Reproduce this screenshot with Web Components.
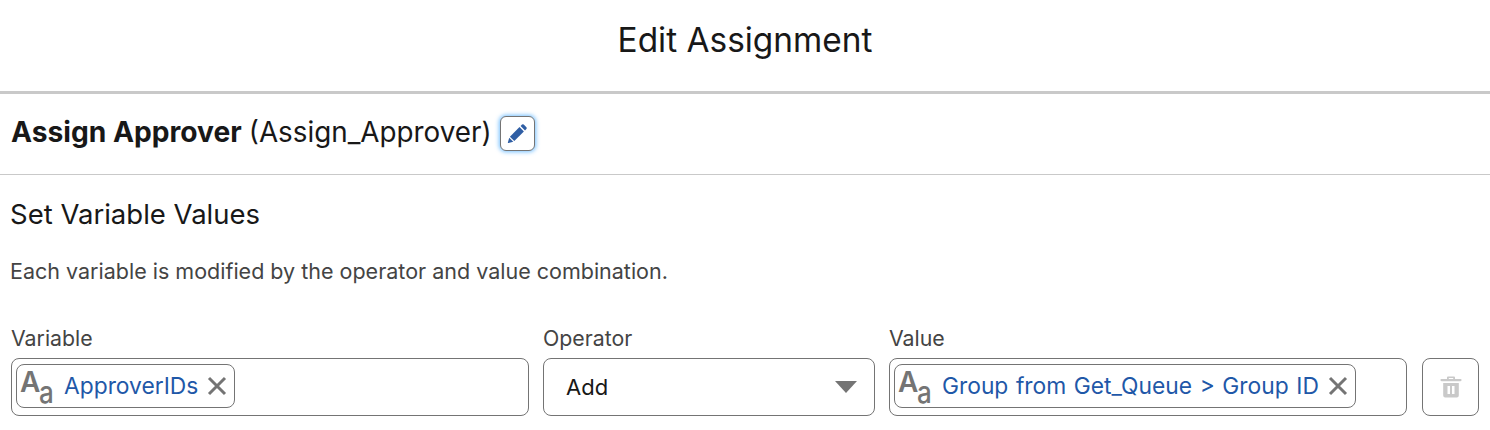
<!DOCTYPE html>
<html lang="en">
<head>
<meta charset="UTF-8">
<title>Edit Assignment</title>
<style>
  html, body { margin: 0; background: #fff; }
  body { font-family: Inter, "Liberation Sans", sans-serif; color: #181818; }
</style>
</head>
<body>
<edit-assignment>
  <assign-header></assign-header>
  <var-section></var-section>
</edit-assignment>

<script>
class EditAssignment extends HTMLElement {
  constructor() {
    super();
    this.attachShadow({ mode: 'open' }).innerHTML = `
      <style>
        :host { display: block; width: 1490px; height: 430px; overflow: hidden; }
        h1 { margin: 0; height: 91px; box-sizing: border-box; padding-top: 17px; text-align: center;
             font: 400 33.4px/46px Inter, sans-serif; color: #181818; }
        .rule { height: 3px; background: #c9c9c9; }
      </style>
      <h1>Edit Assignment</h1>
      <div class="rule"></div>
      <slot></slot>`;
  }
}

class AssignHeader extends HTMLElement {
  constructor() {
    super();
    this.attachShadow({ mode: 'open' }).innerHTML = `
      <style>
        :host { display: flex; align-items: center; height: 80px; padding-left: 11px;
                border-bottom: 1px solid #c9c9c9; font: 400 27.8px/34px Inter, sans-serif; color: #181818; }
        .txt { position: relative; top: -2px; }
        b { font-weight: 700; font-size: 28.2px; margin-right: 7px; }
        button { width: 35px; height: 35px; margin: -2px 0 0 8px; padding: 0; display: flex; align-items: center; justify-content: center;
                 background: #fff; border: 1px solid #747474; border-radius: 6px; box-shadow: 0 0 4px 1px #1b96ff99; }
      </style>
      <span class="txt"><b>Assign Approver</b><span>(Assign_Approver)</span></span>
      <button aria-label="Edit">
        <svg width="21" height="21" viewBox="0 0 21 21" fill="#2f5ea4">
          <path d="M15 1.6 a1.2 1.2 0 0 1 1.7 0 l2.7 2.7 a1.2 1.2 0 0 1 0 1.7 l-1.4 1.4 -4.4-4.4z"/>
          <path d="M12.5 4.1 l4.4 4.4 -9.6 9.6 -4.4-4.4z"/>
          <path d="M2.2 14.7 l4.1 4.1 -4.8 1.2 a.5.5 0 0 1-.6-.6z"/>
        </svg>
      </button>`;
  }
}

class VarSection extends HTMLElement {
  constructor() {
    super();
    this.attachShadow({ mode: 'open' }).innerHTML = `
      <style>
        :host { display: block; padding: 0 11px; }
        h2 { margin: 0 0 0 -1px; padding-top: 21px; font: 400 27.5px/36px Inter, sans-serif; color: #181818; }
        p { margin: 25px 0 0 -1px; font: 400 21.5px/28px Inter, sans-serif; color: #444; }
        .row { display: grid; grid-template-columns: 518px 332px 518px 58px; column-gap: 14px; margin-top: 41px; align-items: end; }
        .trash { box-sizing: border-box; height: 58px; margin-left: 1px; border: 1px solid #747474; border-radius: 8px; display: flex; align-items: center; justify-content: center; background: #fff; }
      </style>
      <h2>Set Variable Values</h2>
      <p>Each variable is modified by the operator and value combination.</p>
      <div class="row">
        <field-box label="Variable"><var-pill>ApproverIDs</var-pill></field-box>
        <field-box label="Operator" select>Add</field-box>
        <field-box label="Value"><var-pill>Group from Get_Queue &gt; Group ID</var-pill></field-box>
        <div class="trash">
          <svg width="22" height="24" viewBox="0 0 22 24" fill="#c9c9c9" aria-hidden="true">
            <path d="M8 1.5h6a1 1 0 0 1 1 1V4h5.5a.8.8 0 0 1 0 2.2H1.5a.8.8 0 0 1 0-2.2H7V2.5a1 1 0 0 1 1-1zM8.8 3v1h4.4V3z"/>
            <path fill-rule="evenodd" d="M3.2 8h15.6v12.5a2 2 0 0 1-2 2H5.2a2 2 0 0 1-2-2zM7.5 11v8h2.5v-8zM12 11v8h2.5v-8z"/>
          </svg>
        </div>
      </div>`;
  }
}

class FieldBox extends HTMLElement {
  constructor() {
    super();
    this.attachShadow({ mode: 'open' });
  }
  connectedCallback() {
    const isSelect = this.hasAttribute('select');
    this.shadowRoot.innerHTML = `
      <style>
        :host { display: block; }
        label { display: block; height: 32px; font: 400 21.3px/24px Inter, sans-serif; color: #444; }
        .box { box-sizing: border-box; height: 58px; display: flex; align-items: center; background: #fff;
               border: 1px solid #747474; border-radius: 8px; padding: 0 4px 2px; font: 400 22px/28px Inter, sans-serif; color: #181818; }
        .box.select { padding: 0 22px; justify-content: space-between; }
        .arrow { width: 0; height: 0; margin-right: -5px; border-left: 11px solid transparent; border-right: 11px solid transparent; border-top: 12px solid #747474; }
      </style>
      <label>${this.getAttribute('label')}</label>
      <div class="box ${isSelect ? 'select' : ''}"><span><slot></slot></span>${isSelect ? '<i class="arrow"></i>' : ''}</div>`;
  }
}

class VarPill extends HTMLElement {
  constructor() {
    super();
    this.attachShadow({ mode: 'open' }).innerHTML = `
      <style>
        :host { display: inline-flex; box-sizing: border-box; height: 44px; align-items: center; vertical-align: middle;
                border: 1px solid #747474; border-radius: 8px; padding: 0 7px 0 4px; }
        .type { position: relative; display: block; width: 43px; height: 36px; flex: none; color: #747474; }
        .type b { position: absolute; left: -1px; top: -3px; font: 600 28px/34px Inter, sans-serif; }
        .type i { position: absolute; left: 18px; top: 11px; font: 500 26px/30px Inter, sans-serif; font-style: normal;
                  transform: scaleY(1.2); transform-origin: 50% 78%; }
        .name { font: 400 22.8px/28px Inter, sans-serif; word-spacing: 1.2px; color: #1f58a8; white-space: nowrap; }
        svg { margin-left: 9px; flex: none; }
      </style>
      <span class="type"><b>A</b><i>a</i></span>
      <span class="name"><slot></slot></span>
      <svg width="20" height="20" viewBox="0 0 20 20" aria-hidden="true"><path d="M2 2 18 18M18 2 2 18" stroke="#747474" stroke-width="3" fill="none"/></svg>`;
  }
}

customElements.define('edit-assignment', EditAssignment);
customElements.define('assign-header', AssignHeader);
customElements.define('var-section', VarSection);
customElements.define('field-box', FieldBox);
customElements.define('var-pill', VarPill);
</script>
</body>
</html>
